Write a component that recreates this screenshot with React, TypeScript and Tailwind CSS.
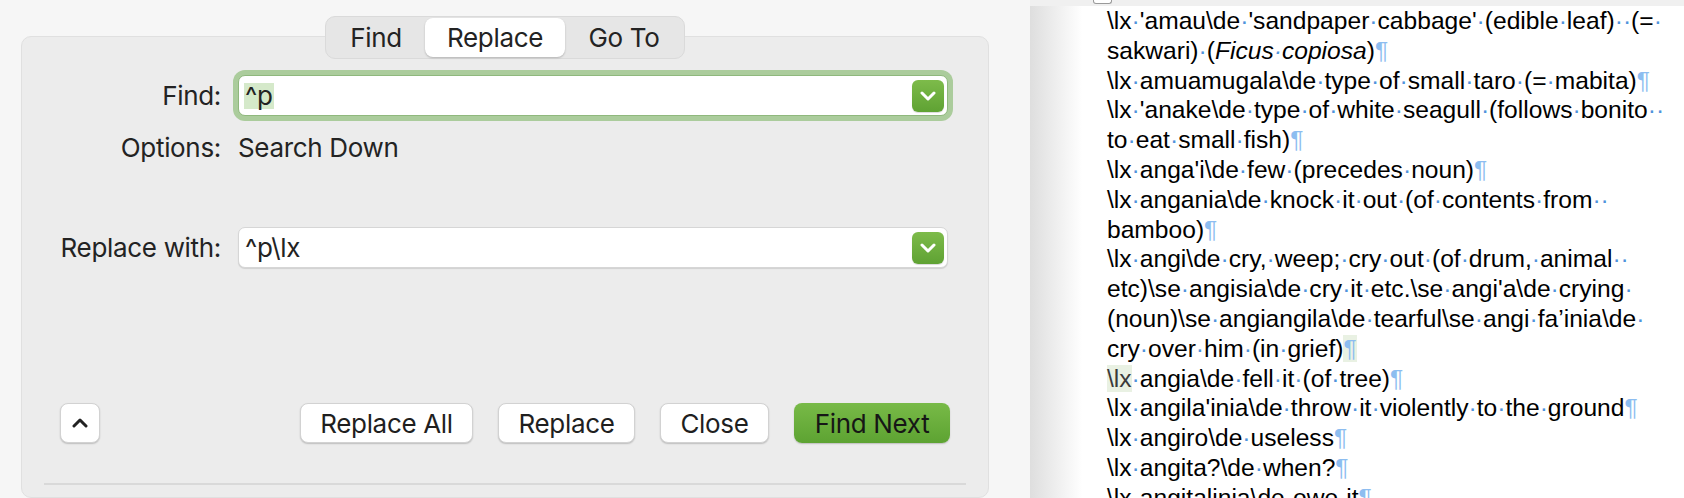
import { Fragment } from 'react';

type Seg = { t?: string; it?: boolean; hl?: boolean; pil?: boolean };

const docLines: Seg[][] = [
  [{ t: "\\lx 'amau\\de 'sandpaper cabbage' (edible leaf)  (= " }],
  [{ t: 'sakwari) (' }, { t: 'Ficus copiosa', it: true }, { t: ')' }, { pil: true }],
  [{ t: '\\lx amuamugala\\de type of small taro (= mabita)' }, { pil: true }],
  [{ t: "\\lx 'anake\\de type of white seagull (follows bonito  " }],
  [{ t: 'to eat small fish)' }, { pil: true }],
  [{ t: "\\lx anga'i\\de few (precedes noun)" }, { pil: true }],
  [{ t: '\\lx angania\\de knock it out (of contents from  ' }],
  [{ t: 'bamboo)' }, { pil: true }],
  [{ t: '\\lx angi\\de cry, weep; cry out (of drum, animal  ' }],
  [{ t: "etc)\\se angisia\\de cry it etc.\\se angi'a\\de crying " }],
  [{ t: '(noun)\\se angiangila\\de tearful\\se angi fa’inia\\de ' }],
  [{ t: 'cry over him (in grief)' }, { pil: true, hl: true }],
  [{ t: '\\lx', hl: true }, { t: ' angia\\de fell it (of tree)' }, { pil: true }],
  [{ t: "\\lx angila'inia\\de throw it violently to the ground" }, { pil: true }],
  [{ t: '\\lx angiro\\de useless' }, { pil: true }],
  [{ t: '\\lx angita?\\de when?' }, { pil: true }],
  [{ t: '\\lx angitalinia\\de owe it' }, { pil: true }],
];

function Dotted({ text }: { text: string }) {
  const parts = text.split(' ');
  return (
    <>
      {parts.map((p, i) => (
        <Fragment key={i}>
          {i > 0 && <span className="text-[#4f93dc]">·</span>}
          {p}
        </Fragment>
      ))}
    </>
  );
}

function DocLine({ segs }: { segs: Seg[] }) {
  return (
    <div className="h-[29.8px] whitespace-pre leading-[29.8px]">
      {segs.map((s, i) => {
        if (s.pil) {
          return (
            <span key={i} className={s.hl ? 'bg-[#e9f1e3] text-[#8dbdf0]' : 'text-[#8dbdf0]'}>
              ¶
            </span>
          );
        }
        return (
          <span key={i} className={(s.it ? 'italic ' : '') + (s.hl ? 'bg-[#e9f1e3] text-[#3a3a3a]' : '')}>
            <Dotted text={s.t ?? ''} />
          </span>
        );
      })}
    </div>
  );
}

function ChevronDown() {
  return (
    <svg width="16" height="10" viewBox="0 0 16 10" fill="none">
      <polyline points="2,2 8,8 14,2" stroke="white" strokeWidth="3" strokeLinecap="round" strokeLinejoin="round" />
    </svg>
  );
}

function ChevronUp() {
  return (
    <svg width="16" height="10" viewBox="0 0 16 10" fill="none">
      <polyline points="2,8 8,2 14,8" stroke="#222" strokeWidth="3" strokeLinecap="round" strokeLinejoin="round" />
    </svg>
  );
}

function GreenMenu() {
  return (
    <div className="flex h-[32px] w-[32px] items-center justify-center rounded-[6px] bg-gradient-to-b from-[#7dbb4a] to-[#5fa233] shadow-[0_1px_1px_rgba(0,0,0,0.15)]">
      <ChevronDown />
    </div>
  );
}

function PushButton({ label, width }: { label: string; width: string }) {
  return (
    <button
      className={`flex h-[40px] items-center justify-center rounded-[8px] border-[0.5px] border-[#d2d2d2] bg-white text-[26px] text-[#1f1f1f] shadow-[0_1px_1.5px_rgba(0,0,0,0.2)] ${width}`}
    >
      {label}
    </button>
  );
}

export default function App() {
  return (
    <div className="flex h-[498px] w-[1684px] overflow-hidden bg-[#f6f6f6]">
      {/* find & replace dialog */}
      <div className="flex w-[1030px] shrink-0 flex-col pl-[21px] pr-[41px] pt-[16px] font-['Inter',sans-serif] tracking-[-0.02em] text-[#232323]">
        <div className="relative z-10 flex h-[43px] w-[360px] self-center rounded-[10px] border border-[#dadada] bg-[#e6e6e6] p-[1px] text-[26px]">
          <div className="flex w-[98px] items-center justify-center">Find</div>
          <div className="flex w-[140px] items-center justify-center rounded-[8px] bg-white shadow-[0_1px_2px_rgba(0,0,0,0.22)]">
            Replace
          </div>
          <div className="flex w-[118px] items-center justify-center">Go To</div>
        </div>

        <div className="-mt-[23px] h-[500px] rounded-[10px] border border-[#e0e0e0] bg-[#ececec] pt-[38px] text-[26px]">
          <div className="flex items-center">
            <div className="w-[199px] text-right">Find:</div>
            <div className="ml-[17px] flex h-[41px] w-[710px] items-center rounded-[7px] border border-[#8fb87d] bg-white pl-[5px] pr-[3px] shadow-[0_0_0_5px_#abcc9c]">
              <span className="bg-[#d5e9ca] px-[1px] leading-[26px]">^p</span>
              <div className="flex-1" />
              <GreenMenu />
            </div>
          </div>

          <div className="mt-[16px] flex h-[31px] items-center">
            <div className="w-[199px] text-right">Options:</div>
            <div className="ml-[17px]">Search Down</div>
          </div>

          <div className="mt-[64px] flex items-center">
            <div className="w-[199px] text-right">Replace with:</div>
            <div className="ml-[17px] flex h-[41px] w-[710px] items-center rounded-[7px] border border-[#d6d6d6] bg-white pl-[6px] pr-[3px] shadow-[0_1px_1px_rgba(0,0,0,0.12)]">
              <span>^p\lx</span>
              <div className="flex-1" />
              <GreenMenu />
            </div>
          </div>

          <div className="mt-[135px] flex items-center justify-between pl-[38px] pr-[38px]">
            <button className="flex h-[40px] w-[40px] items-center justify-center rounded-[8px] border-[0.5px] border-[#d2d2d2] bg-white shadow-[0_1px_1.5px_rgba(0,0,0,0.2)]">
              <ChevronUp />
            </button>
            <div className="flex gap-[25px]">
              <PushButton label="Replace All" width="w-[173px]" />
              <PushButton label="Replace" width="w-[137px]" />
              <PushButton label="Close" width="w-[109px]" />
              <button className="flex h-[40px] w-[156px] items-center justify-center rounded-[8px] bg-gradient-to-b from-[#78ba47] to-[#5da332] text-[26px] text-[#161616] shadow-[0_1px_1.5px_rgba(0,0,0,0.2)]">
                Find Next
              </button>
            </div>
          </div>

          <div className="mx-[22px] mt-[40px] h-[2px] bg-[#d9d9d9]" />
        </div>
      </div>

      {/* document */}
      <div className="relative flex-1 bg-gradient-to-r from-[#dedede] via-white via-[8%] to-white">
        <div className="h-[6px] bg-[#f0f0f0]" />
        <div className="absolute left-[63px] top-0 h-[4px] w-[19px] rounded-b-[3px] border border-t-0 border-[#9a9a9a] bg-white" />
        <div className="pl-[77px] font-['Liberation_Sans',Arial,sans-serif] text-[24.6px] text-black">
          {docLines.map((l, i) => (
            <DocLine key={i} segs={l} />
          ))}
        </div>
      </div>
    </div>
  );
}
